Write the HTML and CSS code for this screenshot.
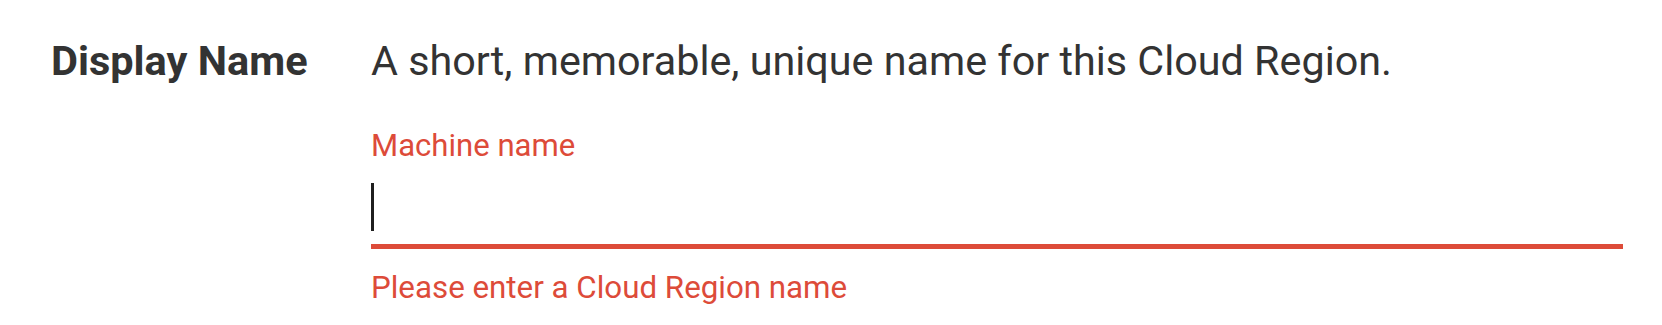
FILE: index.html
```html
<!DOCTYPE html>
<html lang="en">
<head>
<meta charset="utf-8">
<title>Display Name</title>
<link rel="stylesheet" href="styles.css">
</head>
<body>
<div class="form-row">
  <div class="row-label">Display Name</div>
  <div class="row-body">
    <div class="description">A short, memorable, unique name for this Cloud Region.</div>
    <div class="field-label">Machine name</div>
    <div class="field-input"><span class="caret"></span></div>
    <div class="field-error">Please enter a Cloud Region name</div>
  </div>
</div>
</body>
</html>
```

FILE: styles.css
```css
html, body {
  margin: 0;
  padding: 0;
  background: #ffffff;
}

body {
  font-family: Roboto, "Liberation Sans", sans-serif;
  color: #333333;
}

.form-row {
  display: flex;
  padding: 37px 39px 0 51px;
}

.row-label {
  width: 320px;
  flex: none;
  font-size: 41.5px;
  line-height: 48px;
  font-weight: 700;
  color: #333333;
}

.row-body {
  flex: 1;
  display: flex;
  flex-direction: column;
}

.description {
  font-size: 41.3px;
  line-height: 48px;
  font-weight: 400;
  color: #333333;
}

.field-label {
  margin-top: 43px;
  font-size: 31.1px;
  line-height: 36px;
  color: #dd4b39;
}

.field-input {
  padding: 19px 0 13px;
  border-bottom: 5px solid #dd4b39;
  display: flex;
}

.caret {
  display: block;
  width: 3px;
  height: 48px;
  background: #1f1f1f;
}

.field-error {
  margin-top: 21px;
  font-size: 31.3px;
  line-height: 36px;
  color: #dd4b39;
}
```
